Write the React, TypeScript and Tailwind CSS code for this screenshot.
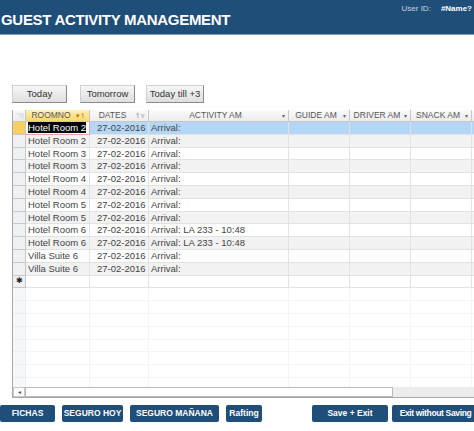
import React from 'react'

const cols = [
  { key: 'room', label: 'ROOMNO', w: 'w-[64px]', icon: 'sort' },
  { key: 'date', label: 'DATES', w: 'w-[59px]', icon: 'filter' },
  { key: 'act', label: 'ACTIVITY AM', w: 'w-[140px]', icon: 'drop' },
  { key: 'guide', label: 'GUIDE AM', w: 'w-[61px]', icon: 'drop' },
  { key: 'driver', label: 'DRIVER AM', w: 'w-[61px]', icon: 'drop' },
  { key: 'snack', label: 'SNACK AM', w: 'w-[61px]', icon: 'drop' },
  { key: 'extra', label: '', w: 'w-[61px]', icon: 'none' },
]

const widths = ['w-[64px]', 'w-[59px]', 'w-[140px]', 'w-[61px]', 'w-[61px]', 'w-[61px]', 'w-[61px]']

const rows = [
  ['Hotel Room 2', 'Arrival:'],
  ['Hotel Room 2', 'Arrival:'],
  ['Hotel Room 3', 'Arrival:'],
  ['Hotel Room 3', 'Arrival:'],
  ['Hotel Room 4', 'Arrival:'],
  ['Hotel Room 4', 'Arrival:'],
  ['Hotel Room 5', 'Arrival:'],
  ['Hotel Room 5', 'Arrival:'],
  ['Hotel Room 6', 'Arrival: LA 233 - 10:48'],
  ['Hotel Room 6', 'Arrival: LA 233 - 10:48'],
  ['Villa Suite 6', 'Arrival:'],
  ['Villa Suite 6', 'Arrival:'],
]

function GrayButton({ label, w }: { label: string; w: string }) {
  return (
    <button
      type="button"
      className={`${w} h-[18px] shrink-0 border border-[#d0d0d0] border-r-[#8a8a8a] border-b-[#8a8a8a] bg-gradient-to-b from-[#f7f7f7] to-[#dedede] text-[9.5px] leading-none text-[#333]`}
    >
      {label}
    </button>
  )
}

function BlueButton({ label, w, tight }: { label: string; w: string; tight?: boolean }) {
  return (
    <button
      type="button"
      className={`${w} h-[17px] shrink-0 whitespace-nowrap rounded-[2px] bg-[#1f4e79] text-[8.5px] font-bold leading-none text-white ${tight ? 'tracking-[-0.35px]' : ''}`}
    >
      {label}
    </button>
  )
}

function HeaderIcon({ kind }: { kind: string }) {
  if (kind === 'none') return null
  if (kind === 'sort') return <span className="text-[7px] leading-none text-[#b07800]">▾↿</span>
  if (kind === 'filter') return <span className="text-[7px] leading-none text-[#777]">↿▿</span>
  return <span className="text-[6px] leading-none text-[#666]">▾</span>
}

export default function App() {
  return (
    <div className="relative h-[431px] w-[474px] overflow-hidden bg-white font-['Liberation_Sans',Arial,sans-serif]">
      <div className="flex h-[35px] items-start justify-between border-b border-[#7f9cc0] bg-[#1f4e79]">
        <h1 className="mt-[9px] whitespace-nowrap pl-[1px] text-[15px] font-bold tracking-[-0.3px] text-white">
          GUEST ACTIVITY MANAGEMENT
        </h1>
        <div className="mt-[3px] flex gap-[10px] pr-[2px] text-[8px]">
          <span className="text-[#c9d3e0]">User ID:</span>
          <span className="font-bold text-white">#Name?</span>
        </div>
      </div>

      <div className="ml-[12px] mt-[50px] flex items-start">
        <GrayButton label="Today" w="w-[55px]" />
        <div className="w-[13px] shrink-0" />
        <GrayButton label="Tomorrow" w="w-[55px]" />
        <div className="w-[11px] shrink-0" />
        <GrayButton label="Today till +3" w="w-[58px]" />
      </div>

      <div className="ml-[12px] mt-[7px] h-[277px] w-[462px] overflow-hidden border-l border-[#a8a8a8] text-[9.5px] text-[#444]">
        <div className="flex h-[12px] w-max border-b border-[#c8c8c8] bg-gradient-to-b from-[#fafafa] to-[#ececec] text-[8.5px] leading-none text-[#555]">
          <div className="relative w-[13px] shrink-0 border-r border-[#c8c8c8]">
            <span className="absolute bottom-0 right-[1px] h-0 w-0 border-l-[8px] border-t-[8px] border-l-transparent border-t-[#dde4ee]" />
          </div>
          {cols.map((c, i) => (
            <div
              key={c.key}
              className={`${c.w} flex shrink-0 items-center border-r border-[#c8c8c8] pr-[3px] ${i === 0 ? 'bg-gradient-to-b from-[#fff0b8] to-[#fcd66a]' : ''}`}
            >
              <span className="flex-1 text-center">{c.label}</span>
              <HeaderIcon kind={c.icon} />
            </div>
          ))}
        </div>

        {rows.map((r, i) => {
          const selected = i === 0
          const bg = selected ? 'bg-[#b5d7f7]' : i % 2 === 1 ? 'bg-[#f2f2f2]' : 'bg-white'
          return (
            <div key={i} className={`flex h-[12.8px] w-max ${bg}`}>
              <div
                className={`w-[13px] shrink-0 border-b border-r border-[#c8c8c8] ${selected ? 'bg-[#f8cf63]' : 'bg-[#eef0f3]'}`}
              />
              <div
                className={`w-[64px] shrink-0 border-b border-r pl-[2px] leading-[12px] ${selected ? 'border-[#e8a0a0] bg-white' : 'border-[#e2e2e2]'}`}
              >
                <span className={selected ? 'bg-black text-white' : ''}>{r[0]}</span>
              </div>
              <div className="w-[59px] shrink-0 border-b border-r border-[#e2e2e2] pl-[7px] leading-[12px]">
                27-02-2016
              </div>
              <div className="w-[140px] shrink-0 whitespace-nowrap border-b border-r border-[#e2e2e2] pl-[2px] leading-[12px]">
                {r[1]}
              </div>
              {[0, 1, 2, 3].map((k) => (
                <div key={k} className="w-[61px] shrink-0 border-b border-r border-[#e2e2e2]" />
              ))}
            </div>
          )
        })}

        <div className="flex h-[12.8px] w-max bg-white">
          <div className="flex w-[13px] shrink-0 items-center justify-center border-b border-r border-[#c8c8c8] bg-[#eef0f3] text-[8px] leading-none text-[#222]">
            ✱
          </div>
          {widths.map((w, k) => (
            <div key={k} className={`${w} shrink-0 border-b border-r border-[#e2e2e2]`} />
          ))}
        </div>

        {[0, 1, 2, 3, 4, 5, 6, 7].map((i) => (
          <div key={i} className="flex h-[12.8px] w-max">
            <div className="w-[13px] shrink-0 border-b border-r border-[#eceef2] bg-[#f6f7f9]" />
            {widths.map((w, k) => (
              <div key={k} className={`${w} shrink-0 border-b border-r border-[#f4f4f4]`} />
            ))}
          </div>
        ))}
      </div>

      <div className="ml-[12px] flex h-[11px] w-[462px] border-b border-l border-[#a8a8a8] bg-[#ececec]">
        <div className="flex w-[12px] items-center justify-center border border-[#c8c8c8] bg-white text-[6px] leading-none text-[#555]">
          ◂
        </div>
        <div className="w-[368px] border border-[#b8b8b8] bg-white" />
      </div>

      <div className="mt-[7px] flex">
        <div className="flex gap-[7px]">
          <BlueButton label="FICHAS" w="w-[55px]" />
          <BlueButton label="SEGURO HOY" w="w-[61px]" />
          <BlueButton label="SEGURO MAÑANA" w="w-[89px]" />
          <BlueButton label="Rafting" w="w-[36px]" />
        </div>
        <div className="ml-[50px] flex gap-[4px]">
          <BlueButton label="Save  + Exit" w="w-[76px]" />
          <BlueButton label="Exit without Saving" w="w-[87px]" tight />
        </div>
      </div>
    </div>
  )
}
